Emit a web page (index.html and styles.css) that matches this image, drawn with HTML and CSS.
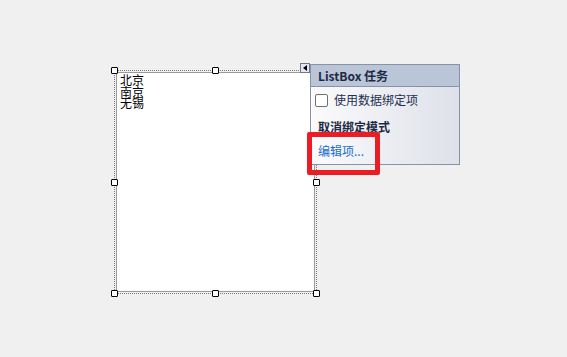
FILE: index.html
```html
<!DOCTYPE html>
<html>
<head>
<meta charset="utf-8">
<link rel="stylesheet" href="styles.css">
</head>
<body>
<div class="surface">
  <div class="frame">
    <div class="listbox">
      <div class="items">北京<br>南京<br>无锡</div>
    </div>
    <span class="handle h-tl"></span>
    <span class="handle h-tc"></span>
    <span class="handle h-tr"></span>
    <span class="handle h-ml"></span>
    <span class="handle h-mr"></span>
    <span class="handle h-bl"></span>
    <span class="handle h-bc"></span>
    <span class="handle h-br"></span>
  </div>
  <div class="smarttag"><span class="tri"></span></div>
  <div class="panel">
    <div class="panel-head">ListBox 任务</div>
    <div class="panel-body">
      <label class="check-row"><span class="checkbox"></span><span>使用数据绑定项</span></label>
      <div class="section">取消绑定模式</div>
      <a class="link">编辑项...</a>
    </div>
  </div>
  <div class="highlight"></div>
</div>
</body>
</html>
```
FILE: styles.css
```css
html, body {
  margin: 0;
  padding: 0;
  background: #f0f0f0;
}
body {
  width: 567px;
  height: 357px;
  overflow: hidden;
  font-family: "Noto Sans CJK SC", "Noto Sans", sans-serif;
}
.surface {
  position: relative;
  width: 567px;
  height: 357px;
}
.frame {
  position: absolute;
  left: 114px;
  top: 70px;
  width: 203px;
  height: 224px;
  box-sizing: border-box;
  border: 1px dotted #7a7a7a;
  padding: 1px;
}
.listbox {
  box-sizing: border-box;
  height: 100%;
  background: #fff;
  border: 1px solid #9a9a9a;
  padding: 1px 0 0 3px;
}
.items {
  font-family: "Noto Sans CJK SC", sans-serif;
  font-size: 12px;
  line-height: 11.7px;
  color: #000;
}
.handle {
  position: absolute;
  width: 5px;
  height: 5px;
  background: #fff;
  border: 1px solid #000;
  border-radius: 1px;
}
.h-tl { left: -4px; top: -4px; }
.h-tc { left: 97px; top: -4px; }
.h-tr { right: -4px; top: -4px; }
.h-ml { left: -4px; top: 108px; }
.h-mr { right: -4px; top: 108px; }
.h-bl { left: -4px; bottom: -4px; }
.h-bc { left: 97px; bottom: -4px; }
.h-br { right: -4px; bottom: -4px; }
.smarttag {
  position: absolute;
  left: 300px;
  top: 63px;
  width: 8px;
  height: 8px;
  border: 1px solid #6d7890;
  background: #e4e7ee;
  display: flex;
  align-items: center;
  justify-content: center;
}
.tri {
  width: 0;
  height: 0;
  border-top: 3px solid transparent;
  border-bottom: 3px solid transparent;
  border-right: 4px solid #000;
}
.panel {
  position: absolute;
  left: 310px;
  top: 64px;
  width: 150px;
  height: 101px;
  box-sizing: border-box;
  border: 1px solid #8893aa;
  display: flex;
  flex-direction: column;
  background: linear-gradient(to right, #fbfbfc, #dee1e9);
}
.panel-head {
  height: 22px;
  box-sizing: border-box;
  background: #bac5d8;
  border-bottom: 1px solid #8893aa;
  font-weight: bold;
  font-size: 12px;
  line-height: 21px;
  color: #1e2a44;
  padding-left: 7px;
}
.panel-body {
  display: flex;
  flex-direction: column;
  padding: 6px 0 0 4px;
}
.check-row {
  display: flex;
  align-items: center;
  gap: 6px;
  font-size: 12px;
  line-height: 14px;
  color: #1e3050;
  height: 14px;
}
.checkbox {
  width: 11px;
  height: 11px;
  border: 1px solid #707070;
  border-radius: 2px;
  background: #fff;
}
.section {
  margin-top: 13px;
  padding-left: 3px;
  font-size: 12px;
  font-weight: bold;
  line-height: 14px;
  color: #1e2a44;
}
.link {
  margin-top: 10px;
  padding-left: 3px;
  font-size: 12px;
  line-height: 14px;
  color: #1a6fd1;
}
.highlight {
  position: absolute;
  left: 307px;
  top: 132px;
  width: 73px;
  height: 43px;
  box-sizing: border-box;
  border: 5px solid #ec1c24;
  border-radius: 2px;
}
```
